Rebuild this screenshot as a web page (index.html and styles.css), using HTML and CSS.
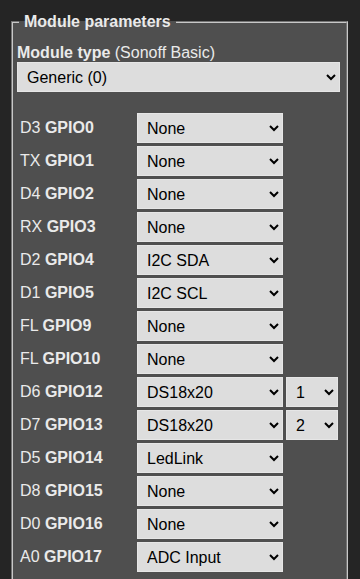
FILE: index.html
```html
<!DOCTYPE html>
<html lang="en">
<head>
  <meta charset="UTF-8">
  <meta name="viewport" content="width=device-width, initial-scale=1.0">
  <title>Configure Module</title>
  <link rel="stylesheet" href="styles.css">
</head>
<body>
  <div class="page">
    <fieldset class="module-box">
      <legend><b>Module parameters</b></legend>

      <div class="module-type">
        <b>Module type</b> (Sonoff Basic)
      </div>
      <select id="module">
        <option selected>Generic (0)</option>
        <option>Sonoff Basic (1)</option>
        <option>Sonoff RF (2)</option>
      </select>

      <div class="gpio-list">
        <div class="gpio-row">
          <span class="gpio-label">D3 <b>GPIO0</b></span>
          <select><option selected>None</option><option>Button1</option></select>
        </div>
        <div class="gpio-row">
          <span class="gpio-label">TX <b>GPIO1</b></span>
          <select><option selected>None</option><option>Serial Tx</option></select>
        </div>
        <div class="gpio-row">
          <span class="gpio-label">D4 <b>GPIO2</b></span>
          <select><option selected>None</option><option>Led1</option></select>
        </div>
        <div class="gpio-row">
          <span class="gpio-label">RX <b>GPIO3</b></span>
          <select><option selected>None</option><option>Serial Rx</option></select>
        </div>
        <div class="gpio-row">
          <span class="gpio-label">D2 <b>GPIO4</b></span>
          <select><option>None</option><option selected>I2C SDA</option></select>
        </div>
        <div class="gpio-row">
          <span class="gpio-label">D1 <b>GPIO5</b></span>
          <select><option>None</option><option selected>I2C SCL</option></select>
        </div>
        <div class="gpio-row">
          <span class="gpio-label">FL <b>GPIO9</b></span>
          <select><option selected>None</option></select>
        </div>
        <div class="gpio-row">
          <span class="gpio-label">FL <b>GPIO10</b></span>
          <select><option selected>None</option></select>
        </div>
        <div class="gpio-row">
          <span class="gpio-label">D6 <b>GPIO12</b></span>
          <select><option>None</option><option selected>DS18x20</option></select>
          <select class="index"><option selected>1</option><option>2</option></select>
        </div>
        <div class="gpio-row">
          <span class="gpio-label">D7 <b>GPIO13</b></span>
          <select><option>None</option><option selected>DS18x20</option></select>
          <select class="index"><option>1</option><option selected>2</option></select>
        </div>
        <div class="gpio-row">
          <span class="gpio-label">D5 <b>GPIO14</b></span>
          <select><option>None</option><option selected>LedLink</option></select>
        </div>
        <div class="gpio-row">
          <span class="gpio-label">D8 <b>GPIO15</b></span>
          <select><option selected>None</option></select>
        </div>
        <div class="gpio-row">
          <span class="gpio-label">D0 <b>GPIO16</b></span>
          <select><option selected>None</option></select>
        </div>
        <div class="gpio-row">
          <span class="gpio-label">A0 <b>GPIO17</b></span>
          <select><option>None</option><option selected>ADC Input</option></select>
        </div>
      </div>
    </fieldset>
  </div>
</body>
</html>
```

FILE: styles.css
```css
body {
  margin: 0;
  background: #252525;
  color: #eaeaea;
  font-family: 'Liberation Sans', Arial, sans-serif;
  font-size: 16px;
}

.page {
  padding: 13px 0 0 11px;
}

.module-box {
  width: 323px;
  margin: 0;
  padding: 12px 6px 10px 4px;
  background: #4f4f4f;
  border: 2px groove #c8c8c8;
}

legend {
  margin-left: 2px;
  padding: 0 5px;
  line-height: 18px;
}

.module-type {
  line-height: 19px;
}

select {
  height: 30px;
  padding: 0 5px;
  font-family: inherit;
  font-size: 16px;
  color: #000;
  background: #dddddd;
  border: 1px solid #e6e6e6;
  border-radius: 0;
  box-sizing: border-box;
}

#module {
  width: 100%;
  display: block;
}

.gpio-list {
  margin-top: 21px;
}

.gpio-row {
  display: grid;
  grid-template-columns: 117px 146px 52px;
  column-gap: 3px;
  align-items: center;
  margin-bottom: 3px;
}

.gpio-label {
  padding-left: 3px;
}

select.index {
  width: 52px;
}
```
